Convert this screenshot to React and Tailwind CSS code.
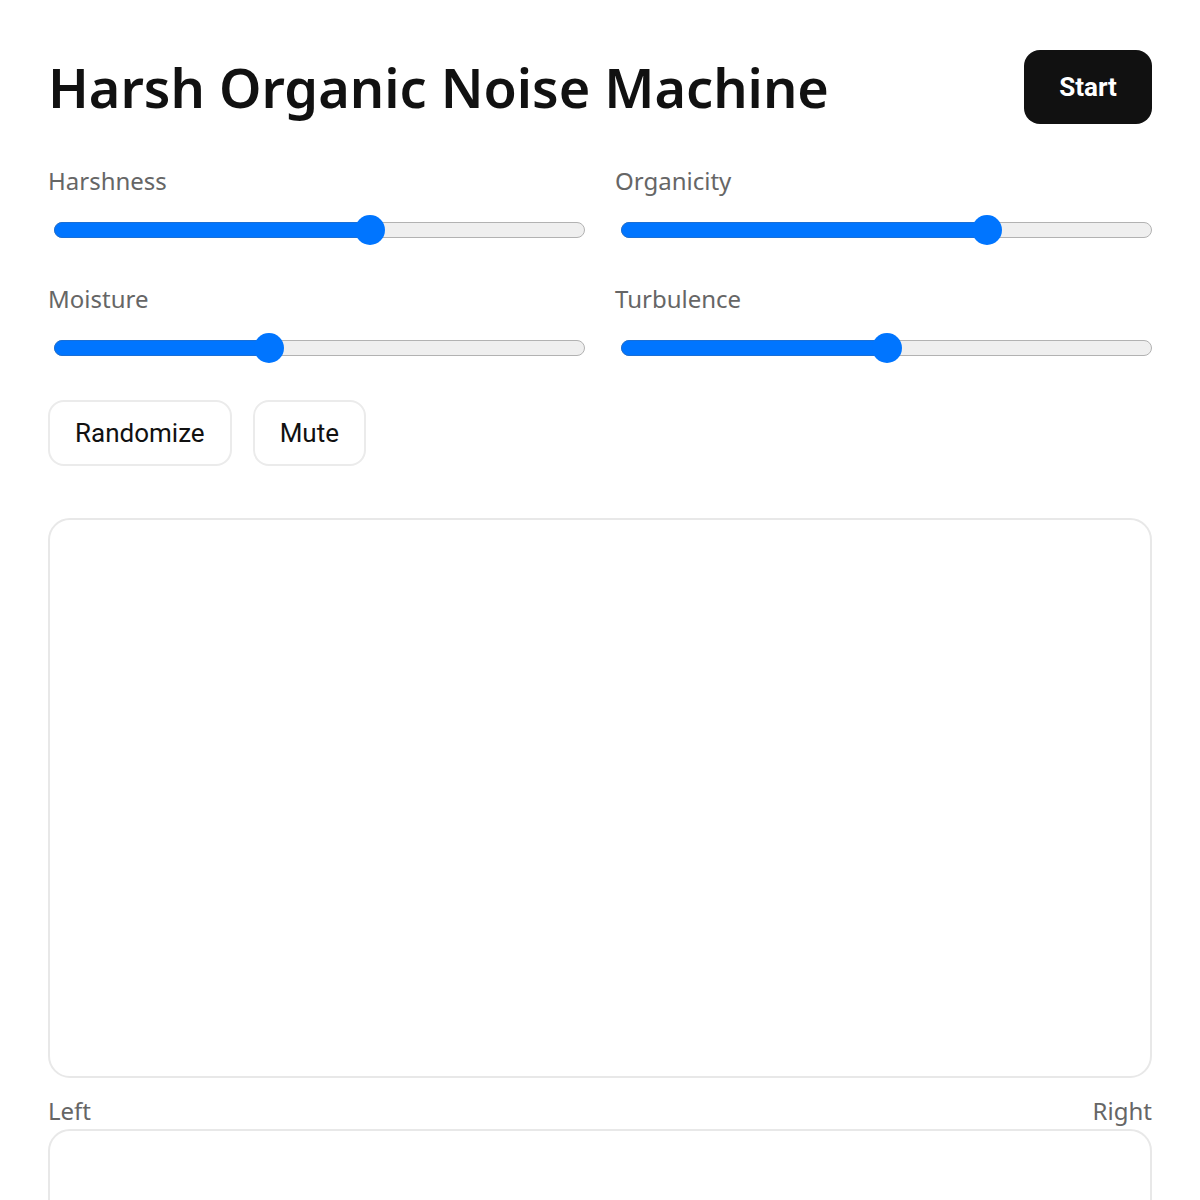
import React from "react";

const sliders = [
  { label: "Harshness", value: 0.6 },
  { label: "Organicity", value: 0.7 },
  { label: "Moisture", value: 0.4 },
  { label: "Turbulence", value: 0.5 },
];

function Slider({ label, value }) {
  return (
    <div className="flex flex-col">
      <div className="text-[24px] leading-[30px] text-[#666666] font-['Noto_Sans',sans-serif]">{label}</div>
      <div className="relative h-[30px] mt-[19px] ml-[6px]">
        <div className="absolute left-0 right-0 top-[7px] h-[16px] rounded-full border border-[#b2b2b2] bg-[#efefef]" />
        <div
          className="absolute left-0 top-[7px] h-[16px] rounded-full border border-[#1a6fd6] bg-[#0075ff]"
          style={{ width: `calc(15px + (100% - 30px) * ${value})` }}
        />
        <div
          className="absolute top-0 w-[30px] h-[30px] rounded-full bg-[#0075ff]"
          style={{ left: `calc((100% - 30px) * ${value})` }}
        />
      </div>
    </div>
  );
}

export default function App() {
  return (
    <div className="min-h-[1200px] bg-white px-[48px] pt-[50px] font-['Noto_Sans',sans-serif]">
      <div className="flex items-center justify-between">
        <h1 className="text-[54px] leading-[74px] font-semibold text-[#111111]">
          Harsh Organic Noise Machine
        </h1>
        <button className="w-[128px] h-[74px] rounded-[16px] bg-[#111111] text-white text-[26px] font-bold font-['Roboto',sans-serif]">
          Start
        </button>
      </div>

      <div className="grid grid-cols-2 gap-x-[30px] gap-y-[39px] mt-[42px]">
        {sliders.map((s) => (
          <Slider key={s.label} {...s} />
        ))}
      </div>

      <div className="flex gap-[21px] mt-[37px]">
        <button className="h-[66px] px-[25px] rounded-[16px] border-2 border-[#ebebeb] bg-white text-[26px] text-[#111111] font-['Roboto',sans-serif]">
          Randomize
        </button>
        <button className="h-[66px] px-[25px] rounded-[16px] border-2 border-[#ebebeb] bg-white text-[26px] text-[#111111] font-['Roboto',sans-serif]">
          Mute
        </button>
      </div>

      <div className="mt-[52px] h-[560px] rounded-[22px] border-2 border-[#e8e8e8] bg-white" />

      <div className="flex justify-between mt-[18px] text-[24px] leading-[30px] text-[#666666]">
        <span>Left</span>
        <span>Right</span>
      </div>

      <div className="mt-[3px] h-[200px] rounded-[22px] border-2 border-[#e8e8e8] bg-white" />
    </div>
  );
}
